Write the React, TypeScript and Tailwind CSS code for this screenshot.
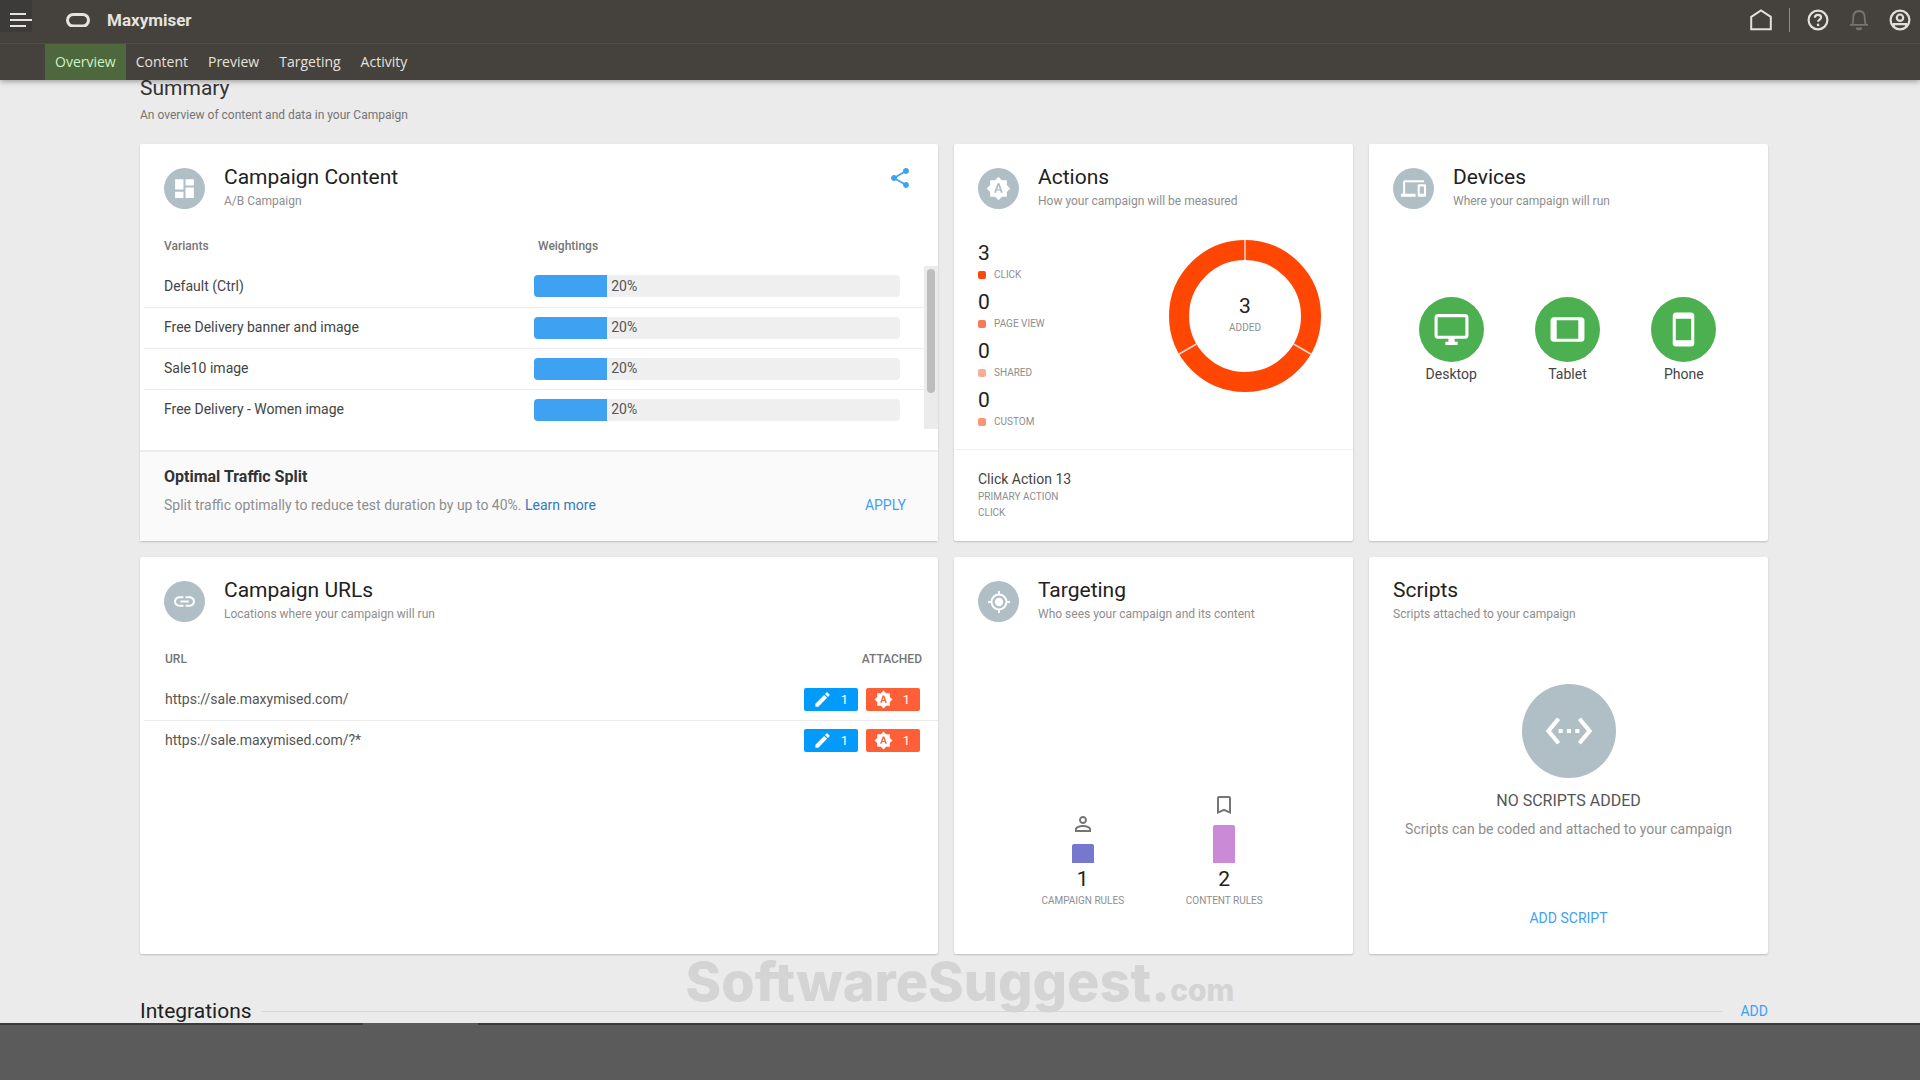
import type { ReactNode } from "react";
import {
  MdBookmarkBorder,
  MdBrightnessAuto,
  MdDashboard,
  MdDevices,
  MdEdit,
  MdLink,
  MdOutlineDesktopWindows,
  MdPersonOutline,
  MdSettingsEthernet,
  MdShare,
  MdStayCurrentPortrait,
  MdTablet,
} from "react-icons/md";

const tabs = ["Overview", "Content", "Preview", "Targeting", "Activity"];

const variants = [
  { name: "Default (Ctrl)", weight: 20 },
  { name: "Free Delivery banner and image", weight: 20 },
  { name: "Sale10 image", weight: 20 },
  { name: "Free Delivery - Women image", weight: 20 },
];

const actionCounts = [
  { count: 3, label: "CLICK", color: "bg-[#fc4a0b]" },
  { count: 0, label: "PAGE VIEW", color: "bg-[#f47c58]" },
  { count: 0, label: "SHARED", color: "bg-[#ffae95]" },
  { count: 0, label: "CUSTOM", color: "bg-[#fa9674]" },
];

const devices = [
  { name: "Desktop", icon: <MdOutlineDesktopWindows size={37} /> },
  { name: "Tablet", icon: <MdTablet size={37} /> },
  { name: "Phone", icon: <MdStayCurrentPortrait size={37} /> },
];

const urls = ["https://sale.maxymised.com/", "https://sale.maxymised.com/?*"];

function OracleMark() {
  return (
    <svg width="24" height="14" viewBox="0 0 24 14" fill="none" stroke="#e6e3df" strokeWidth="3" aria-hidden="true">
      <rect x="1.5" y="1.5" width="21" height="11.5" rx="5.7" />
    </svg>
  );
}

function HomeIcon() {
  return (
    <svg width="22" height="22" viewBox="0 0 22 22" fill="none" stroke="#e3dfda" strokeWidth="2" aria-hidden="true">
      <path d="M1.2 7.8 11 1.4l9.8 6.4v12.4H1.2z" />
    </svg>
  );
}

function HelpIcon() {
  return (
    <svg width="22" height="22" viewBox="0 0 22 22" fill="none" stroke="#e3dfda" strokeWidth="2.2" aria-hidden="true">
      <circle cx="11" cy="11" r="9.4" />
      <path d="M7.9 8.7c0-1.8 1.3-2.9 3.1-2.9s3.1 1 3.1 2.6c0 2.1-3 2.2-3 4.4" />
      <circle cx="11.1" cy="15.9" r="0.6" strokeWidth="1.4" />
    </svg>
  );
}

function BellIcon() {
  return (
    <svg width="20" height="22" viewBox="0 0 20 22" fill="none" stroke="#77736e" strokeWidth="1.8" aria-hidden="true">
      <path d="M1 15.8h18M3.4 15.5c.7-1.5.8-3 .8-6 0-4.5 2-7.5 5.8-7.5s5.8 3 5.8 7.5c0 3 .1 4.500.8 6" />
      <path d="M7 18.6h6v.6a3 2 0 0 1-6 0z" fill="#77736e" stroke="none" />
    </svg>
  );
}

function UserIcon() {
  return (
    <svg width="22" height="22" viewBox="0 0 22 22" fill="none" stroke="#e3dfda" strokeWidth="2.2" aria-hidden="true">
      <circle cx="11" cy="11" r="9.4" />
      <circle cx="11" cy="8.7" r="3.2" />
      <path d="M4.8 17.6v-2.400h12.400v2.400" />
    </svg>
  );
}

function TargetIcon() {
  return (
    <svg width="24" height="24" viewBox="0 0 24 24" fill="none" stroke="#fff" strokeWidth="2" aria-hidden="true">
      <circle cx="12" cy="12" r="7.5" />
      <path d="M12 1v4M12 19v4M1 12h4M19 12h4" />
      <circle cx="12" cy="12" r="4.2" fill="#fff" stroke="none" />
    </svg>
  );
}

function DonutChart() {
  return (
    <svg viewBox="0 0 154 154" className="size-[154px]" role="img" aria-label="3 click actions added">
      <circle cx="77" cy="77" r="66" fill="none" stroke="#ff4703" strokeWidth="20" />
      <g stroke="#ffd9cb" strokeWidth="1.5">
        <path d="M77 21V0.5" />
        <path d="M77 21V0.5" transform="rotate(120 77 77)" />
        <path d="M77 21V0.5" transform="rotate(240 77 77)" />
      </g>
    </svg>
  );
}

function Card({
  title,
  subtitle,
  icon,
  action,
  children,
}: {
  title: string;
  subtitle: string;
  icon?: ReactNode;
  action?: ReactNode;
  children: ReactNode;
}) {
  return (
    <section className="flex min-h-[397px] flex-col rounded-xs bg-white shadow-[0_1px_2px_rgba(0,0,0,0.2)]">
      <header className="flex items-start px-6 pt-[21px]">
        {icon && (
          <span className="mt-[3px] mr-[19px] flex size-[41px] shrink-0 items-center justify-center rounded-full bg-[#b0bec5] text-white">
            {icon}
          </span>
        )}
        <div className="min-w-0 flex-1">
          <h2 className="text-[21px] leading-6 text-[#212121]">{title}</h2>
          <p className="text-[12px] leading-6 text-[#8e8e8e]">{subtitle}</p>
        </div>
        {action}
      </header>
      {children}
    </section>
  );
}

function CampaignContent() {
  return (
    <Card
      title="Campaign Content"
      subtitle="A/B Campaign"
      icon={<MdDashboard size={25} />}
      action={
        <button type="button" aria-label="Share" className="mt-px mr-0.5 text-[#3ea1f1]">
          <MdShare size={24} />
        </button>
      }
    >
      <div className="mt-5 flex pl-1">
        <table className="flex-1 table-fixed border-collapse text-left">
          <thead>
            <tr className="h-[33px] text-[12px] text-[#757575]">
              <th scope="col" className="w-1/2 pb-2 pl-5 font-medium">Variants</th>
              <th scope="col" className="w-1/2 pb-2 pl-1 font-medium">Weightings</th>
            </tr>
          </thead>
          <tbody>
            {variants.map((v) => (
              <tr key={v.name} className="h-[41px] border-b border-[#ececec] last:border-b-0">
                <td className="pl-5 text-[14px] text-[#444]">{v.name}</td>
                <td className="pr-6">
                  <div className="flex h-[22px] items-center overflow-hidden rounded bg-[#efefef]">
                    <div className="h-full bg-[#3ea1f1]" style={{ width: v.weight + "%" }} />
                    <span className="pl-1 text-[14px] text-[#555]">{v.weight}%</span>
                  </div>
                </td>
              </tr>
            ))}
          </tbody>
        </table>
        <div className="mt-[33px] h-[163px] w-[14px] bg-[#ebebeb] px-[3px] pt-[3px]">
          <div className="h-[124px] rounded bg-[#bdbdbd]" />
        </div>
      </div>
      <footer className="mt-auto flex min-h-[91px] items-start justify-between border-t-2 border-[#ececec] bg-[#fafafb] px-6 pt-[13px]">
        <div>
          <h3 className="text-[16px] leading-6 font-bold text-[#333]">Optimal Traffic Split</h3>
          <p className="pt-1 text-[14px] leading-6 text-[#8e8e8e]">
            Split traffic optimally to reduce test duration by up to 40%.{" "}
            <a href="#learn" className="text-[#337ab7]">Learn more</a>
          </p>
        </div>
        <button type="button" className="mt-7 mr-2 text-[14px] leading-6 text-[#3ea1f1]">APPLY</button>
      </footer>
    </Card>
  );
}

function Actions() {
  return (
    <Card title="Actions" subtitle="How your campaign will be measured" icon={<MdBrightnessAuto size={25} />}>
      <div className="flex justify-between pt-[26px] pr-[31px] pl-6">
        <ul className="pt-0.5">
          {actionCounts.map((a) => (
            <li key={a.label} className="h-[49px]">
              <p className="text-[21px] leading-6 text-[#212121]">{a.count}</p>
              <p className="flex items-center gap-2 text-[10px] leading-5 text-[#8e8e8e]">
                <span className={"size-2 rounded-xs " + a.color} />
                {a.label}
              </p>
            </li>
          ))}
        </ul>
        <div className="grid place-items-center self-start *:col-start-1 *:row-start-1">
          <DonutChart />
          <div className="text-center">
            <p className="text-[21px] leading-6 text-[#212121]">3</p>
            <p className="text-[10px] leading-5 text-[#8e8e8e]">ADDED</p>
          </div>
        </div>
      </div>
      <footer className="mt-auto min-h-[92px] border-t border-[#efefef] px-6 pt-[19px]">
        <p className="text-[14px] leading-5 text-[#444]">Click Action 13</p>
        <p className="text-[10px] leading-4 text-[#8e8e8e]">PRIMARY ACTION</p>
        <p className="text-[10px] leading-4 text-[#8e8e8e]">CLICK</p>
      </footer>
    </Card>
  );
}

function Devices() {
  return (
    <Card title="Devices" subtitle="Where your campaign will run" icon={<MdDevices size={25} />}>
      <ul className="grid grid-cols-3 pt-21 pr-[26px] pl-6">
        {devices.map((d) => (
          <li key={d.name} className="flex flex-col items-center text-[14px] leading-6 text-[#444]">
            <span className="flex size-[65px] items-center justify-center rounded-full bg-[#4caf50] text-white">{d.icon}</span>
            {d.name}
          </li>
        ))}
      </ul>
    </Card>
  );
}

function CampaignUrls() {
  return (
    <Card title="Campaign URLs" subtitle="Locations where your campaign will run" icon={<MdLink size={25} />}>
      <div className="mt-5 pl-1">
        <table className="w-full border-collapse text-left">
          <thead>
            <tr className="h-[33px] text-[12px] text-[#757575]">
              <th scope="col" className="pb-2 pl-[21px] font-medium">URL</th>
              <th scope="col" className="pr-4 pb-2 text-right font-medium">ATTACHED</th>
            </tr>
          </thead>
          <tbody>
            {urls.map((url) => (
              <tr key={url} className="h-[41px] border-b border-[#ececec] last:border-b-0">
                <td className="pl-[21px] text-[14px] text-[#555]">{url}</td>
                <td className="pr-[18px]">
                  <div className="flex justify-end gap-2 text-[13px] text-white">
                    <span className="flex h-[23px] w-[54px] items-center justify-between rounded-xs bg-[#039bf9] pr-[10px] pl-[9px]">
                      <MdEdit size={19} />1
                    </span>
                    <span className="flex h-[23px] w-[54px] items-center justify-between rounded-xs bg-[#ff5f36] pr-[10px] pl-2">
                      <MdBrightnessAuto size={19} />1
                    </span>
                  </div>
                </td>
              </tr>
            ))}
          </tbody>
        </table>
      </div>
    </Card>
  );
}

function RuleColumn({ icon, bar, count, label }: { icon: ReactNode; bar: string; count: number; label: string }) {
  return (
    <li className="flex flex-1 flex-col items-center justify-end">
      <span className="mb-2 text-[#757575]">{icon}</span>
      <span className={"w-[22px] rounded-t-xs " + bar} />
      <span className="mt-1 text-[21px] leading-6 text-[#212121]">{count}</span>
      <span className="text-[10px] leading-5 text-[#8e8e8e]">{label}</span>
    </li>
  );
}

function Targeting() {
  return (
    <Card title="Targeting" subtitle="Who sees your campaign and its content" icon={<TargetIcon />}>
      <ul className="mt-auto flex px-[58px] pb-[43px]">
        <RuleColumn icon={<MdPersonOutline size={24} />} bar="h-[19px] bg-[#7678cd]" count={1} label="CAMPAIGN RULES" />
        <RuleColumn icon={<MdBookmarkBorder size={24} />} bar="h-[38px] bg-[#cb8ad6]" count={2} label="CONTENT RULES" />
      </ul>
    </Card>
  );
}

function Scripts() {
  return (
    <Card title="Scripts" subtitle="Scripts attached to your campaign">
      <div className="flex flex-1 flex-col items-center pt-[58px] pb-6 text-center">
        <span className="flex size-[94px] items-center justify-center rounded-full bg-[#b0bec5] text-white">
          <MdSettingsEthernet size={50} />
        </span>
        <h3 className="mt-[11px] text-[16px] leading-6 text-[#555]">NO SCRIPTS ADDED</h3>
        <p className="mt-1 text-[14px] leading-6 text-[#8e8e8e]">Scripts can be coded and attached to your campaign</p>
        <button type="button" className="mt-auto text-[14px] leading-6 text-[#3ea1f1]">ADD SCRIPT</button>
      </div>
    </Card>
  );
}

function TopBar() {
  return (
    <header className="relative z-10 bg-[#45413c] font-['Open_Sans',sans-serif] text-[#e6e3df] shadow-[0_1px_6px_rgba(0,0,0,0.4)]">
      <div className="flex h-11 items-start justify-between border-b border-[#504d48] pr-[9px]">
        <div className="flex items-start">
          <button type="button" aria-label="Menu" className="flex h-8 w-8 items-start justify-end bg-[#3c3b39] pt-3">
            <svg width="22" height="16" viewBox="0 0 22 16" stroke="#e6e3df" strokeWidth="2" aria-hidden="true">
              <path d="M0 2h16M0 8h22M0 14h16" />
            </svg>
          </button>
          <span className="ml-[34px] flex h-10 items-center">
            <OracleMark />
          </span>
          <h1 className="ml-[17px] font-[Roboto,sans-serif] text-[17px] leading-10 font-bold">Maxymiser</h1>
        </div>
        <nav aria-label="Account" className="flex h-10 items-center">
          <button type="button" aria-label="Home"><HomeIcon /></button>
          <span className="mx-[17px] h-6 w-px bg-[#8f8b86]" />
          <button type="button" aria-label="Help"><HelpIcon /></button>
          <button type="button" aria-label="Notifications" className="mx-5"><BellIcon /></button>
          <button type="button" aria-label="Profile"><UserIcon /></button>
        </nav>
      </div>
      <nav aria-label="Campaign" className="flex pl-[45px]">
        {tabs.map((tab, i) => (
          <a
            key={tab}
            href={"#" + tab.toLowerCase()}
            aria-current={i === 0 ? "page" : undefined}
            className={
              i === 0
                ? "bg-[#4e683e] px-[10px] text-[14px] leading-9 font-medium text-[#cdf3c4]"
                : "px-[10px] text-[14px] leading-9 font-medium"
            }
          >
            {tab}
          </a>
        ))}
      </nav>
    </header>
  );
}

export default function App() {
  return (
    <div className="flex min-h-screen flex-col bg-[#ebebeb] font-[Roboto,sans-serif]">
      <TopBar />
      <main className="relative flex-1 pr-[152px] pl-[140px]">
        <h2 className="text-[21px] leading-4 text-[#333]">Summary</h2>
        <p className="pt-[7px] text-[12px] leading-6 text-[#757575]">An overview of content and data in your Campaign</p>
        <div className="mt-[17px] grid grid-cols-[2fr_1fr_1fr] gap-4">
          <CampaignContent />
          <Actions />
          <Devices />
          <CampaignUrls />
          <Targeting />
          <Scripts />
        </div>
        <div className="mt-[45px] flex items-center gap-[10px]">
          <h2 className="text-[21px] leading-6 text-[#212121]">Integrations</h2>
          <span className="mr-2 h-px flex-1 bg-[#d6d6d6]" />
          <button type="button" className="text-[14px] leading-6 text-[#3ea1f1]">ADD</button>
        </div>
        <p className="pointer-events-none absolute inset-x-0 bottom-1.5 text-center font-[Inter,sans-serif] text-[54px] leading-[54px] font-extrabold text-[#d4d4d4]">
          SoftwareSuggest.<span className="text-[30px]">com</span>
        </p>
      </main>
      <footer className="h-[58px] bg-[#5b5b5b]">
        <div className="flex h-0.5">
          <span className="w-[363px] bg-[#3b3b3b]" />
          <span className="w-[115px]" />
          <span className="flex-1 bg-[#3b3b3b]" />
        </div>
      </footer>
    </div>
  );
}
